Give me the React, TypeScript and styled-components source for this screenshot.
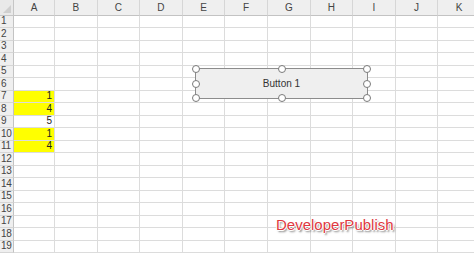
import React from "react";
import styled, { createGlobalStyle } from "styled-components";

const Global = createGlobalStyle`
  html, body { margin: 0; padding: 0; background: #ffffff; overflow: hidden; }
  * { box-sizing: border-box; }
`;

const COLS = ["A", "B", "C", "D", "E", "F", "G", "H", "I", "J", "K"];
const ROWS = 19;

const Sheet = styled.div`
  position: relative;
  width: 474px;
  height: 253px;
  overflow: hidden;
  font-family: "Liberation Sans", Arial, sans-serif;
`;

const Grid = styled.div`
  display: grid;
  grid-template-columns: 14px 41px repeat(10, 42.6px);
  grid-template-rows: 15.5px repeat(${ROWS}, 12.5px);
`;

const Corner = styled.div`
  position: relative;
  background: #e9e9e9;
  border-right: 1px solid #c6c6c6;
  border-bottom: 1px solid #c6c6c6;
  &::after {
    content: "";
    position: absolute;
    right: 2px;
    bottom: 2px;
    width: 0;
    height: 0;
    border-left: 8px solid transparent;
    border-bottom: 8px solid #cfcfcf;
  }
`;

const ColHead = styled.div`
  background: #efefef;
  border-right: 1px solid #d6d6d6;
  border-bottom: 1px solid #c3c3c3;
  color: #444444;
  font-size: 10px;
  display: flex;
  align-items: center;
  justify-content: center;
  padding-top: 1px;
`;

const RowHead = styled.div`
  background: #efefef;
  border-right: 1px solid #c3c3c3;
  border-bottom: 1px solid #d6d6d6;
  color: #444444;
  font-size: 10px;
  display: flex;
  align-items: center;
  padding-left: 1px;
  line-height: 1;
  letter-spacing: -0.3px;
`;

const Cell = styled.div<{ $fill?: string }>`
  background: ${(p) => p.$fill || "#ffffff"};
  border-right: 1px solid #dcdcdc;
  border-bottom: 1px solid #dcdcdc;
  font-size: 10px;
  color: #222222;
  display: flex;
  align-items: center;
  justify-content: flex-end;
  padding-right: 2px;
  line-height: 1;
`;

const ButtonBox = styled.div`
  position: absolute;
  left: 195px;
  top: 68px;
  width: 173px;
  height: 31px;
  background: #efefef;
  border: 1px solid #8c8c8c;
  display: flex;
  align-items: center;
  justify-content: center;
  font-size: 10px;
  color: #333333;
`;

const Handle = styled.span<{ $x: number; $y: number }>`
  position: absolute;
  left: ${(p) => p.$x * 50}%;
  top: ${(p) => p.$y * 50}%;
  width: 8px;
  height: 8px;
  margin-left: -4px;
  margin-top: -4px;
  border-radius: 50%;
  background: #ffffff;
  border: 1px solid #7a7a7a;
`;

const Watermark = styled.div`
  position: absolute;
  left: 276px;
  top: 216px;
  font-size: 15px;
  color: #e0383f;
  text-shadow: -1px 0 #fff, 1px 0 #fff, 0 -1px #fff, 0 1px #fff,
    1.5px 1.5px 2px rgba(0, 0, 0, 0.55);
`;

const values: Record<number, { v: string; fill?: string }> = {
  7: { v: "1", fill: "#ffff00" },
  8: { v: "4", fill: "#ffff00" },
  9: { v: "5" },
  10: { v: "1", fill: "#ffff00" },
  11: { v: "4", fill: "#ffff00" },
};

const handles: [number, number][] = [
  [0, 0], [1, 0], [2, 0],
  [0, 1], [2, 1],
  [0, 2], [1, 2], [2, 2],
];

export default function App() {
  return (
    <>
      <Global />
      <Sheet>
        <Grid>
          <Corner />
          {COLS.map((c) => (
            <ColHead key={c}>{c}</ColHead>
          ))}
          {Array.from({ length: ROWS }, (_, i) => {
            const r = i + 1;
            return (
              <React.Fragment key={r}>
                <RowHead>{r}</RowHead>
                {COLS.map((c) =>
                  c === "A" && values[r] ? (
                    <Cell key={c} $fill={values[r].fill}>
                      {values[r].v}
                    </Cell>
                  ) : (
                    <Cell key={c} />
                  )
                )}
              </React.Fragment>
            );
          })}
        </Grid>
        <ButtonBox>
          Button 1
          {handles.map(([x, y]) => (
            <Handle key={`${x}-${y}`} $x={x} $y={y} />
          ))}
        </ButtonBox>
        <Watermark>DeveloperPublish</Watermark>
      </Sheet>
    </>
  );
}
